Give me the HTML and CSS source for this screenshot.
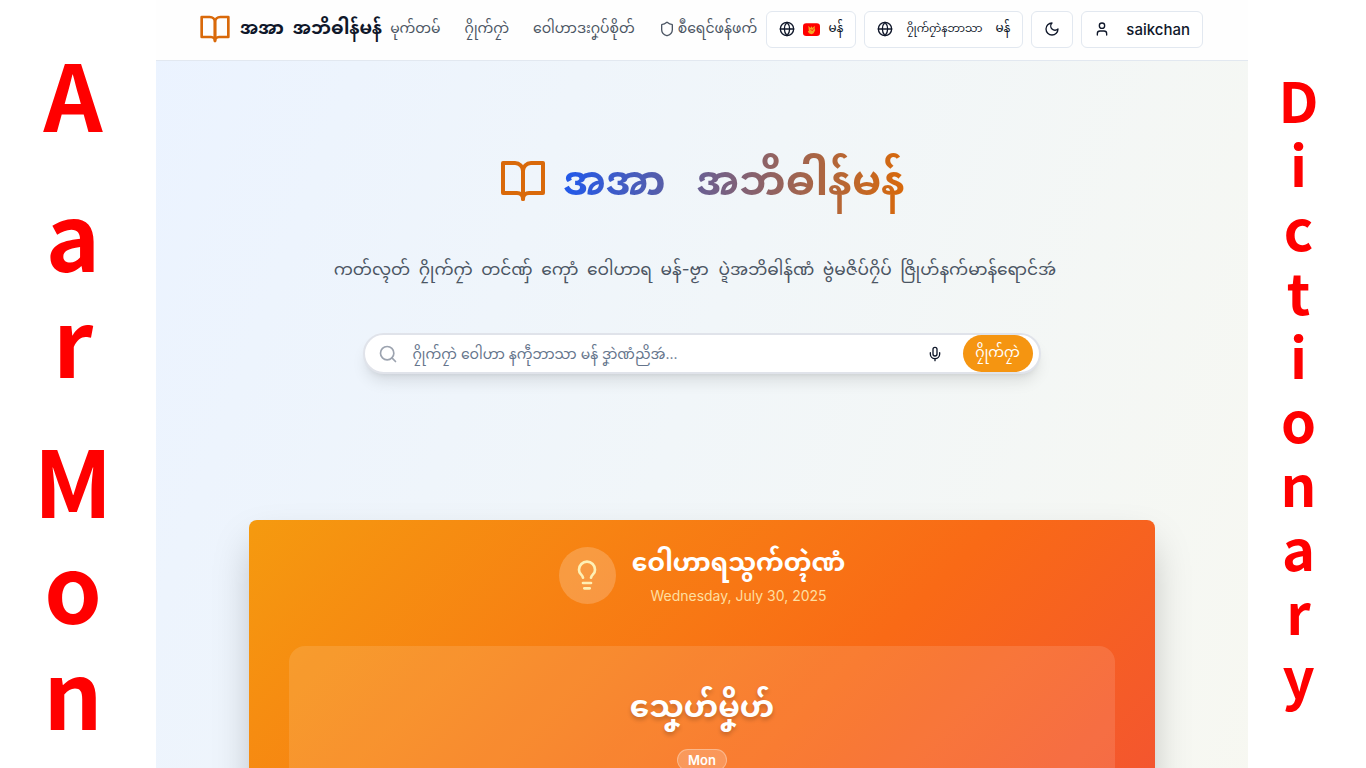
FILE: index.html
```html
<!DOCTYPE html>
<html lang="mnw">
<head>
<meta charset="UTF-8">
<meta name="viewport" content="width=device-width, initial-scale=1.0">
<title>အအာ အဘိဓါန်မန်</title>
<link rel="stylesheet" href="styles.css">
</head>
<body>
<div class="page">
    <!-- Left banner -->
    <aside class="banner banner-left">
        <div class="word"><span>A</span></div>
        <div class="word"><span>a</span><span>r</span></div>
        <div class="word"><span>M</span><span>o</span><span>n</span></div>
    </aside>

    <div class="site">
        <header class="topbar">
            <a class="brand" href="#">
                <svg class="icon" width="32" height="32" viewBox="0 0 24 24"><path d="M2 3h6a4 4 0 0 1 4 4v14a3 3 0 0 0-3-3H2z"/><path d="M22 3h-6a4 4 0 0 0-4 4v14a3 3 0 0 1 3-3h7z"/></svg>
                <span>အအာ</span> <span>အဘိဓါန်မန်</span>
            </a>
            <nav class="nav">
                <a href="#">မုက်တမ်</a>
                <a href="#">ဂၠိုက်ဂၠာဲ</a>
                <a href="#">ဝေါဟာဒးဂၞပ်စိုတ်</a>
                <a href="#">
                    <svg class="icon" width="16" height="16" viewBox="0 0 24 24"><path d="M20 13c0 5-3.500 7.500-7.660 8.950a1 1 0 0 1-.67-.01C7.500 20.500 4 18 4 13V6a1 1 0 0 1 1-1c2 0 4.500-1.200 6.240-2.720a1.170 1.170 0 0 1 1.520 0C14.510 3.810 17 5 19 5a1 1 0 0 1 1 1z"/></svg>
                    <span>စဳရေင်ဖန်ဖက်</span>
                </a>
            </nav>
            <div class="tools">
                <button class="tool" type="button">
                    <svg class="icon" width="16" height="16" viewBox="0 0 24 24"><circle cx="12" cy="12" r="10"/><path d="M12 2a14.500 14.500 0 0 0 0 20 14.500 14.500 0 0 0 0-20"/><path d="M2 12h20"/></svg>
                    <svg class="flag" width="17" height="13" viewBox="0 0 16 12"><rect width="16" height="12" rx="3" fill="#f00"/><path d="M5 2.500l2 2 1-1.500 1 1.500 2-2v3l.5 1-1.500 3-2 1-2.500-1-1-2 1 0z" fill="#f5a623"/><path d="M7 6l2 1 1-2" fill="none" stroke="#f00" stroke-width=".6"/></svg>
                    <span>မန်</span>
                </button>
                <button class="tool tool-wide" type="button">
                    <svg class="icon" width="16" height="16" viewBox="0 0 24 24"><circle cx="12" cy="12" r="10"/><path d="M12 2a14.500 14.500 0 0 0 0 20 14.500 14.500 0 0 0 0-20"/><path d="M2 12h20"/></svg>
                    <span class="tool-label">ဂၠိုက်ဂၠာဲနဘာသာ</span>
                    <span>မန်</span>
                </button>
                <button class="tool" type="button" aria-label="Dark mode">
                    <svg class="icon" width="16" height="16" viewBox="0 0 24 24"><path d="M12 3a6 6 0 0 0 9 9 9 9 0 1 1-9-9Z"/></svg>
                </button>
                <button class="tool user" type="button">
                    <svg class="icon" width="16" height="16" viewBox="0 0 24 24"><path d="M19 21v-2a4 4 0 0 0-4-4H9a4 4 0 0 0-4 4v2"/><circle cx="12" cy="7" r="4"/></svg>
                    <span>saikchan</span>
                </button>
            </div>
        </header>

        <main>
            <section class="hero">
                <h1>
                    <svg class="icon" width="48" height="48" viewBox="0 0 24 24"><path d="M2 3h6a4 4 0 0 1 4 4v14a3 3 0 0 0-3-3H2z"/><path d="M22 3h-6a4 4 0 0 0-4 4v14a3 3 0 0 1 3-3h7z"/></svg>
                    <span class="title">အအာ&ensp; အဘိဓါန်မန်</span>
                </h1>
                <p class="tagline">ကတ်လ္ၚတ်&ensp;ဂၠိုက်ဂၠာဲ&ensp;တင်ဏှ်&ensp;ကေုာံ&ensp;ဝေါဟာရ&ensp;မန်-ဗၟာ&ensp;ပ္ဍဲအဘိဓါန်ဏံ&ensp;ဗွဲမဇိပ်ဂၠိပ်&ensp;ဇြိုဟ်နက်မာန်ရောင်အဴ</p>
                <form class="search">
                    <svg class="icon" width="20" height="20" viewBox="0 0 24 24"><circle cx="11" cy="11" r="8"/><path d="m21 21-4.300-4.300"/></svg>
                    <input type="text" aria-label="Search" placeholder="ဂၠိုက်ဂၠာဲ ဝေါဟာ နကဵုဘာသာ မန် ဒၞာဲဏံညိအဴ...">
                    <button class="mic" type="button" aria-label="Voice search">
                        <svg class="icon" width="16" height="16" viewBox="0 0 24 24"><path d="M12 2a3 3 0 0 0-3 3v7a3 3 0 0 0 6 0V5a3 3 0 0 0-3-3Z"/><path d="M19 10v2a7 7 0 0 1-14 0v-2"/><path d="M12 19v3"/></svg>
                    </button>
                    <button class="go" type="submit">ဂၠိုက်ဂၠာဲ</button>
                </form>
            </section>

            <!-- Word of the day -->
            <section class="daily">
                <div class="daily-head">
                    <div class="bulb">
                        <svg class="icon" width="32" height="32" viewBox="0 0 24 24"><path d="M15 14c.2-1 .7-1.700 1.500-2.500 1-.9 1.500-2.200 1.500-3.500A6 6 0 0 0 6 8c0 1 .2 2.200 1.500 3.500.7.7 1.300 1.500 1.500 2.500"/><path d="M9 18h6"/><path d="M10 22h4"/></svg>
                    </div>
                    <div>
                        <h2>ဝေါဟာရသွက်တ္ၚဲဏံ</h2>
                        <p class="date">Wednesday, July 30, 2025</p>
                    </div>
                </div>
                <div class="entry">
                    <h3>သၞေဟ်မၞိဟ်</h3>
                    <span class="badge">Mon</span>
                </div>
            </section>
        </main>
    </div>

    <!-- Right banner -->
    <aside class="banner banner-right">
        <div class="word"><span>D</span><span>i</span><span>c</span><span>t</span><span>i</span><span>o</span><span>n</span><span>a</span><span>r</span><span>y</span></div>
    </aside>
</div>
</body>
</html>
```
FILE: styles.css
```css
* {
    box-sizing: border-box;
}
body {
    margin: 0;
    font-family: Inter, "Noto Sans Myanmar", "Noto Sans", sans-serif;
    color: #0f172a;
    background: #fff;
}
h1, h2, h3, p {
    margin: 0;
}
a {
    color: inherit;
    text-decoration: none;
}
button, input {
    font: inherit;
    color: inherit;
}
.icon {
    flex: none;
    fill: none;
    stroke: currentColor;
    stroke-width: 2;
    stroke-linecap: round;
    stroke-linejoin: round;
}
.page {
    display: grid;
    grid-template-columns: 156px minmax(0, 1fr) 118px;
    height: 100vh;
    overflow: hidden;
}

/* side banners */
.banner {
    color: #f00;
    font-family: "Noto Sans CJK SC", sans-serif;
    font-weight: bold;
    text-align: center;
}
.banner span {
    display: block;
}
.banner-left {
    display: flex;
    flex-direction: column;
    gap: 34px;
    padding: 39px 10px 0 0;
    font-size: 92px;
    line-height: 106px;
}
.banner-right {
    padding: 67px 17px 0 0;
    font-size: 56px;
    line-height: 64px;
}

.site {
    background: linear-gradient(110deg, #ebf3ff 0%, #f1f6f9 45%, #f8f8f0 100%);
}

/* header */
.topbar {
    display: flex;
    align-items: center;
    height: 61px;
    padding: 0 45px 2px 43px;
    background: #fefefe;
    border-bottom: 1px solid #e2e8f0;
    white-space: nowrap;
}
.brand {
    display: flex;
    align-items: center;
    gap: 9px;
    font-size: 18px;
    font-weight: bold;
}
.brand .icon {
    color: #d9690a;
}
.nav {
    display: flex;
    gap: 24px;
    margin-left: 8px;
    font-size: 14px;
    color: #4b5563;
}
.nav a {
    display: flex;
    align-items: center;
    gap: 3px;
}
.tools {
    display: flex;
    gap: 8px;
    margin-left: auto;
}
.tool {
    display: flex;
    align-items: center;
    gap: 8px;
    height: 37px;
    padding: 0 12px;
    background: #fff;
    border: 1px solid #e2e8f0;
    border-radius: 6px;
    font-size: 12px;
}
.tool-wide {
    gap: 13px;
}
.tool-label {
    font-size: 11px;
}
.user {
    gap: 16px;
    font-size: 15px;
    font-weight: 500;
}

/* hero */
.hero {
    display: flex;
    flex-direction: column;
    align-items: center;
    padding-top: 80px;
}
h1 {
    display: flex;
    align-items: center;
    gap: 16px;
    height: 80px;
    font-size: 42px;
    line-height: 78px;
    white-space: nowrap;
}
h1 .icon {
    color: #d9690a;
}
.title {
    padding-bottom: 2px;
    background: linear-gradient(90deg, #2159eb, #d9690a);
    -webkit-background-clip: text;
    background-clip: text;
    color: transparent;
}
.tagline {
    margin-top: 32px;
    padding-right: 14px;
    font-size: 17px;
    line-height: 32px;
    color: #4b5563;
    white-space: nowrap;
}
.search {
    display: flex;
    align-items: center;
    width: 62%;
    height: 41px;
    margin-top: 48px;
    padding: 0 6px 0 13px;
    background: #fff;
    border: 2px solid #e0e3ea;
    border-radius: 21px;
    box-shadow: 0 10px 15px -3px rgba(0, 0, 0, 0.1), 0 4px 6px -4px rgba(0, 0, 0, 0.1);
}
.search > .icon {
    color: #9ca3af;
}
.search input {
    flex: 1;
    min-width: 0;
    height: 36px;
    margin-left: 14px;
    padding: 0;
    border: 0;
    outline: none;
    background: none;
    font-size: 14px;
}
.search input::placeholder {
    color: #64748b;
}
.mic {
    display: flex;
    padding: 10px;
    border: 0;
    background: none;
}
.go {
    width: 70px;
    height: 37px;
    margin-left: 10px;
    padding: 0;
    border: 0;
    border-radius: 19px;
    background: #f59511;
    color: #fff;
    font-size: 14px;
}

/* word of the day */
.daily {
    width: 83%;
    height: 600px;
    margin: 146px auto 0;
    padding: 24px 40px;
    border-radius: 8px;
    background: linear-gradient(135deg, #f59a0f 0%, #f96a16 50%, #ef4444 100%);
    box-shadow: 0 20px 40px -6px rgba(0, 0, 0, 0.25);
    color: #fff;
}
.daily-head {
    display: flex;
    justify-content: center;
    align-items: center;
    gap: 16px;
    height: 62px;
    text-align: center;
}
.bulb {
    display: flex;
    align-items: center;
    justify-content: center;
    width: 57px;
    height: 57px;
    border-radius: 50%;
    background: rgba(255, 255, 255, 0.2);
    color: #fef0b5;
}
h2 {
    padding-bottom: 6px;
    font-size: 25px;
    line-height: 36px;
    white-space: nowrap;
}
.date {
    font-size: 14px;
    line-height: 20px;
    color: #fedfa0;
}
.entry {
    display: flex;
    flex-direction: column;
    align-items: center;
    height: 400px;
    margin-top: 40px;
    padding-top: 30px;
    border-radius: 16px;
    background: rgba(255, 255, 255, 0.12);
}
h3 {
    font-size: 31px;
    line-height: 60px;
    text-shadow: 0 3px 4px rgba(0, 0, 0, 0.2);
}
.badge {
    margin-top: 13px;
    padding: 0 10px;
    border: 1px solid rgba(255, 255, 255, 0.3);
    border-radius: 11px;
    background: rgba(255, 255, 255, 0.2);
    font-size: 13px;
    line-height: 20px;
    font-weight: 600;
}
```
